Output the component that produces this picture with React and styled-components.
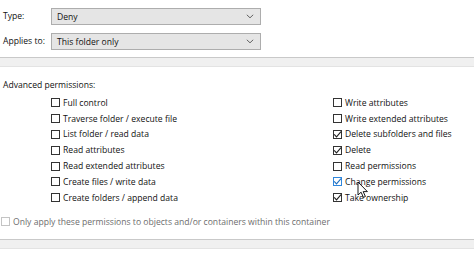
import styled, { createGlobalStyle } from "styled-components";

const GlobalStyle = createGlobalStyle`
  html, body {
    margin: 0;
    background: #fff;
  }
  body {
    font-family: "Open Sans", "Noto Sans", sans-serif;
    font-size: 8.6px;
    color: #111;
  }
`;

const leftPerms = [
  { label: "Full control", checked: false },
  { label: "Traverse folder / execute file", checked: false },
  { label: "List folder / read data", checked: false },
  { label: "Read attributes", checked: false },
  { label: "Read extended attributes", checked: false },
  { label: "Create files / write data", checked: false },
  { label: "Create folders / append data", checked: false },
];

const rightPerms = [
  { label: "Write attributes", checked: false },
  { label: "Write extended attributes", checked: false },
  { label: "Delete subfolders and files", checked: true },
  { label: "Delete", checked: true },
  { label: "Read permissions", checked: false },
  { label: "Change permissions", checked: true, hover: true },
  { label: "Take ownership", checked: true },
];

function Check({ checked, hover, disabled }) {
  return (
    <Box $hover={hover} $disabled={disabled}>
      {checked && (
        <svg width="9" height="9" viewBox="0 0 9 9">
          <path
            d="M1.2 4.4 L3.5 6.9 L8 1.6"
            fill="none"
            stroke={hover ? "#1f6fc0" : "#222"}
            strokeWidth="1.1"
          />
        </svg>
      )}
    </Box>
  );
}

function PermItem({ label, checked, hover }) {
  return (
    <Perm>
      <Check checked={checked} hover={hover} />
      <PermText>{label}</PermText>
      {hover && (
        <Cursor width="12" height="18" viewBox="0 0 12 18">
          <path
            d="M1 1 L1 14 L4.1 11.2 L6.4 16.4 L8.4 15.5 L6.2 10.6 L10.4 10.6 Z"
            fill="#fff"
            stroke="#000"
            strokeWidth="0.9"
            strokeLinejoin="round"
          />
        </Cursor>
      )}
    </Perm>
  );
}

function Select({ value }) {
  return (
    <SelectBox>
      <span>{value}</span>
      <svg width="8" height="5" viewBox="0 0 8 5">
        <path d="M0.8 0.8 L4 3.8 L7.2 0.8" fill="none" stroke="#555" strokeWidth="0.9" />
      </svg>
    </SelectBox>
  );
}

export default function App() {
  return (
    <Page>
      <GlobalStyle />
      <Fields>
        <FieldLabel>Type:</FieldLabel>
        <Select value="Deny" />
        <FieldLabel>Applies to:</FieldLabel>
        <Select value="This folder only" />
      </Fields>

      <Band />

      <Heading>Advanced permissions:</Heading>
      <PermGrid>
        <PermColumn>
          {leftPerms.map((p) => (
            <PermItem key={p.label} {...p} />
          ))}
        </PermColumn>
        <PermColumn>
          {rightPerms.map((p) => (
            <PermItem key={p.label} {...p} />
          ))}
        </PermColumn>
      </PermGrid>

      <ApplyRow>
        <Check disabled />
        <DisabledText>Only apply these permissions to objects and/or containers within this container</DisabledText>
      </ApplyRow>

      <Band $bottom />
    </Page>
  );
}

const Page = styled.div`
  width: 474px;
  height: 255px;
  overflow: hidden;
  padding-top: 8px;
  box-sizing: border-box;
`;

const Fields = styled.div`
  display: grid;
  grid-template-columns: 48px 210px;
  row-gap: 8px;
  align-items: center;
  padding-left: 3px;
`;

const FieldLabel = styled.span`
  line-height: 17px;
`;

const SelectBox = styled.div`
  height: 17px;
  box-sizing: border-box;
  border: 1px solid #adadad;
  background: #e5e5e5;
  display: flex;
  align-items: center;
  justify-content: space-between;
  padding: 0 6px 0 5px;

  svg {
    display: block;
  }
`;

const Band = styled.div`
  height: 10px;
  margin-top: ${({ $bottom }) => ($bottom ? "9px" : "7px")};
  background: #f0f0f0;
  border-top: 1px solid #c9c9c9;
  border-bottom: 1px solid #e3e3e3;
  box-sizing: border-box;
`;

const Heading = styled.div`
  padding-left: 3px;
  margin-top: 11px;
  line-height: 14px;
`;

const PermGrid = styled.div`
  display: grid;
  grid-template-columns: 282px auto;
  padding-left: 51px;
  margin-top: 3px;
`;

const PermColumn = styled.div`
  display: flex;
  flex-direction: column;
`;

const Perm = styled.div`
  position: relative;
  height: 15.8px;
  display: flex;
  align-items: center;
  gap: 3px;
`;

const Box = styled.span`
  width: 9px;
  height: 9px;
  box-sizing: border-box;
  border: 1px solid
    ${({ $hover, $disabled }) => ($hover ? "#2f86dc" : $disabled ? "#c4c4c4" : "#333")};
  background: #fff;
  flex: none;
  display: flex;
  align-items: center;
  justify-content: center;

  svg {
    display: block;
    flex: none;
  }
`;

const PermText = styled.span`
  white-space: nowrap;
`;

const Cursor = styled.svg`
  position: absolute;
  left: 24px;
  top: 7px;
`;

const ApplyRow = styled.div`
  display: flex;
  align-items: center;
  gap: 3px;
  padding-left: 1px;
  margin-top: 8px;
  height: 16px;
`;

const DisabledText = styled.span`
  color: #6d6d6d;
  white-space: nowrap;
`;
